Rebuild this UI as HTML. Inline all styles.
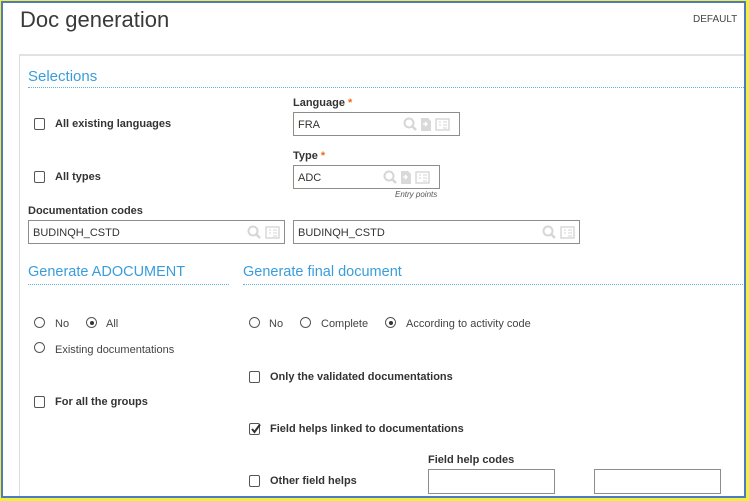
<!DOCTYPE html>
<html><head><meta charset="utf-8"><style>
*{margin:0;padding:0;box-sizing:border-box}
body{width:749px;height:501px;background:#f3ee3a;font-family:"Liberation Sans",sans-serif;color:#333;position:relative;overflow:hidden}
.frame{position:absolute;left:1px;top:1px;width:745px;height:497px;border:2px solid #4b7bc3;background:#fff;overflow:hidden}
.a{position:absolute;white-space:nowrap}
.lbl{font-size:11px;font-weight:bold;color:#333}
.txt{font-size:11px;color:#444}
.h{font-size:15px;color:#3a9ddb}
.dot{position:absolute;height:0;border-top:1px dotted #5ab3e3}
.cb{position:absolute;width:11px;height:12px;border:1.3px solid #555;border-radius:2px;background:#fff}
.rd{position:absolute;width:11px;height:11px;border:1.2px solid #555;border-radius:50%;background:#fff}
.rd.on::after{content:"";position:absolute;left:2.5px;top:2.5px;width:4px;height:4px;border-radius:50%;background:#333}
.in{position:absolute;border:1px solid #8a8f88;background:#fff;font-size:11px;color:#333;padding:6px 0 0 4px}
.star{color:#f06a1c}
.ic{position:absolute;top:4px}
</style></head><body>
<div class="frame">
<div class="a" style="left:17px;top:4px;font-size:22px;color:#3a3a3a">Doc generation</div>
<div class="a" style="left:690px;top:11px;font-size:10px;color:#444">DEFAULT</div>
<div class="a" style="left:741px;top:14px;width:1px;height:6px;background:#888"></div>
<div class="a" style="left:16px;top:51px;width:740px;height:460px;border-top:2px solid #e2e2e2;border-left:1px solid #ddd"></div>
<div class="a h" style="left:25px;top:65px">Selections</div>
<div class="dot" style="left:25px;top:84px;width:730px"></div>

<div class="a lbl" style="left:290px;top:94px">Language <span class="star">*</span></div>
<div class="cb" style="left:31px;top:115px"></div>
<div class="a lbl" style="left:52px;top:115px">All existing languages</div>
<div class="in" style="left:290px;top:109px;width:167px;height:24px">FRA
<svg class="ic" style="left:109px" width="48" height="15" viewBox="0 0 48 15"><circle cx="6" cy="6" r="4.5" fill="none" stroke="#d6d6d6" stroke-width="2"/><path d="M9 9l4 4" stroke="#d6d6d6" stroke-width="2.5"/><path d="M18 1h7l3 3v10h-10z" fill="#d9d9d9"/><path d="M20 7h4M22 5l2 2-2 2" stroke="#fff" stroke-width="1.3" fill="none"/><rect x="33" y="2" width="13" height="11" fill="none" stroke="#d6d6d6" stroke-width="1.4"/><path d="M36 5h2M36 8h2M40 5h4M40 8h4M40 11h4" stroke="#d6d6d6"/></svg></div>

<div class="a lbl" style="left:290px;top:147px">Type <span class="star">*</span></div>
<div class="cb" style="left:31px;top:168px"></div>
<div class="a lbl" style="left:52px;top:168px">All types</div>
<div class="in" style="left:290px;top:162px;width:147px;height:24px">ADC
<svg class="ic" style="left:89px" width="48" height="15" viewBox="0 0 48 15"><circle cx="6" cy="6" r="4.5" fill="none" stroke="#d6d6d6" stroke-width="2"/><path d="M9 9l4 4" stroke="#d6d6d6" stroke-width="2.5"/><path d="M18 1h7l3 3v10h-10z" fill="#d9d9d9"/><path d="M20 7h4M22 5l2 2-2 2" stroke="#fff" stroke-width="1.3" fill="none"/><rect x="33" y="2" width="13" height="11" fill="none" stroke="#d6d6d6" stroke-width="1.4"/><path d="M36 5h2M36 8h2M40 5h4M40 8h4M40 11h4" stroke="#d6d6d6"/></svg></div>
<div class="a" style="left:392px;top:187px;font-size:8px;font-style:italic;color:#555">Entry points</div>

<div class="a lbl" style="left:25px;top:202px">Documentation codes</div>
<div class="in" style="left:25px;top:217px;width:257px;height:24px">BUDINQH_CSTD
<svg class="ic" style="left:218px" width="34" height="15" viewBox="0 0 34 15"><circle cx="6" cy="6" r="4.5" fill="none" stroke="#d6d6d6" stroke-width="2"/><path d="M9 9l4 4" stroke="#d6d6d6" stroke-width="2.5"/><rect x="19" y="2" width="13" height="11" fill="none" stroke="#d6d6d6" stroke-width="1.4"/><path d="M22 5h2M22 8h2M26 5h4M26 8h4M26 11h4" stroke="#d6d6d6"/></svg></div>
<div class="in" style="left:290px;top:217px;width:287px;height:24px">BUDINQH_CSTD
<svg class="ic" style="left:248px" width="34" height="15" viewBox="0 0 34 15"><circle cx="6" cy="6" r="4.5" fill="none" stroke="#d6d6d6" stroke-width="2"/><path d="M9 9l4 4" stroke="#d6d6d6" stroke-width="2.5"/><rect x="19" y="2" width="13" height="11" fill="none" stroke="#d6d6d6" stroke-width="1.4"/><path d="M22 5h2M22 8h2M26 5h4M26 8h4M26 11h4" stroke="#d6d6d6"/></svg></div>

<div class="a h" style="left:25px;top:261px;font-size:14.5px">Generate ADOCUMENT</div>
<div class="dot" style="left:25px;top:281px;width:201px"></div>
<div class="a h" style="left:240px;top:261px;font-size:14.5px">Generate final document</div>
<div class="dot" style="left:240px;top:281px;width:510px"></div>

<div class="rd" style="left:31px;top:314px"></div><div class="a txt" style="left:52px;top:315px">No</div>
<div class="rd on" style="left:83px;top:314px"></div><div class="a txt" style="left:103px;top:315px">All</div>
<div class="rd" style="left:31px;top:339px"></div><div class="a txt" style="left:52px;top:341px">Existing documentations</div>

<div class="rd" style="left:246px;top:314px"></div><div class="a txt" style="left:266px;top:315px">No</div>
<div class="rd" style="left:297px;top:314px"></div><div class="a txt" style="left:318px;top:315px">Complete</div>
<div class="rd on" style="left:382px;top:314px"></div><div class="a txt" style="left:403px;top:315px">According to activity code</div>

<div class="cb" style="left:246px;top:368px"></div><div class="a lbl" style="left:267px;top:368px">Only the validated documentations</div>
<div class="cb" style="left:31px;top:393px"></div><div class="a lbl" style="left:52px;top:393px">For all the groups</div>
<div class="cb" style="left:246px;top:420px"></div>
<svg class="a" style="left:247px;top:420px" width="12" height="12" viewBox="0 0 12 12"><path d="M2 6l2.5 3L10 1.5" stroke="#333" stroke-width="2" fill="none"/></svg>
<div class="a lbl" style="left:267px;top:420px">Field helps linked to documentations</div>

<div class="a lbl" style="left:425px;top:451px">Field help codes</div>
<div class="cb" style="left:246px;top:472px"></div><div class="a lbl" style="left:267px;top:472px">Other field helps</div>
<div class="in" style="left:425px;top:466px;width:127px;height:25px"></div>
<div class="in" style="left:591px;top:466px;width:127px;height:25px"></div>
</div>
</body></html>
